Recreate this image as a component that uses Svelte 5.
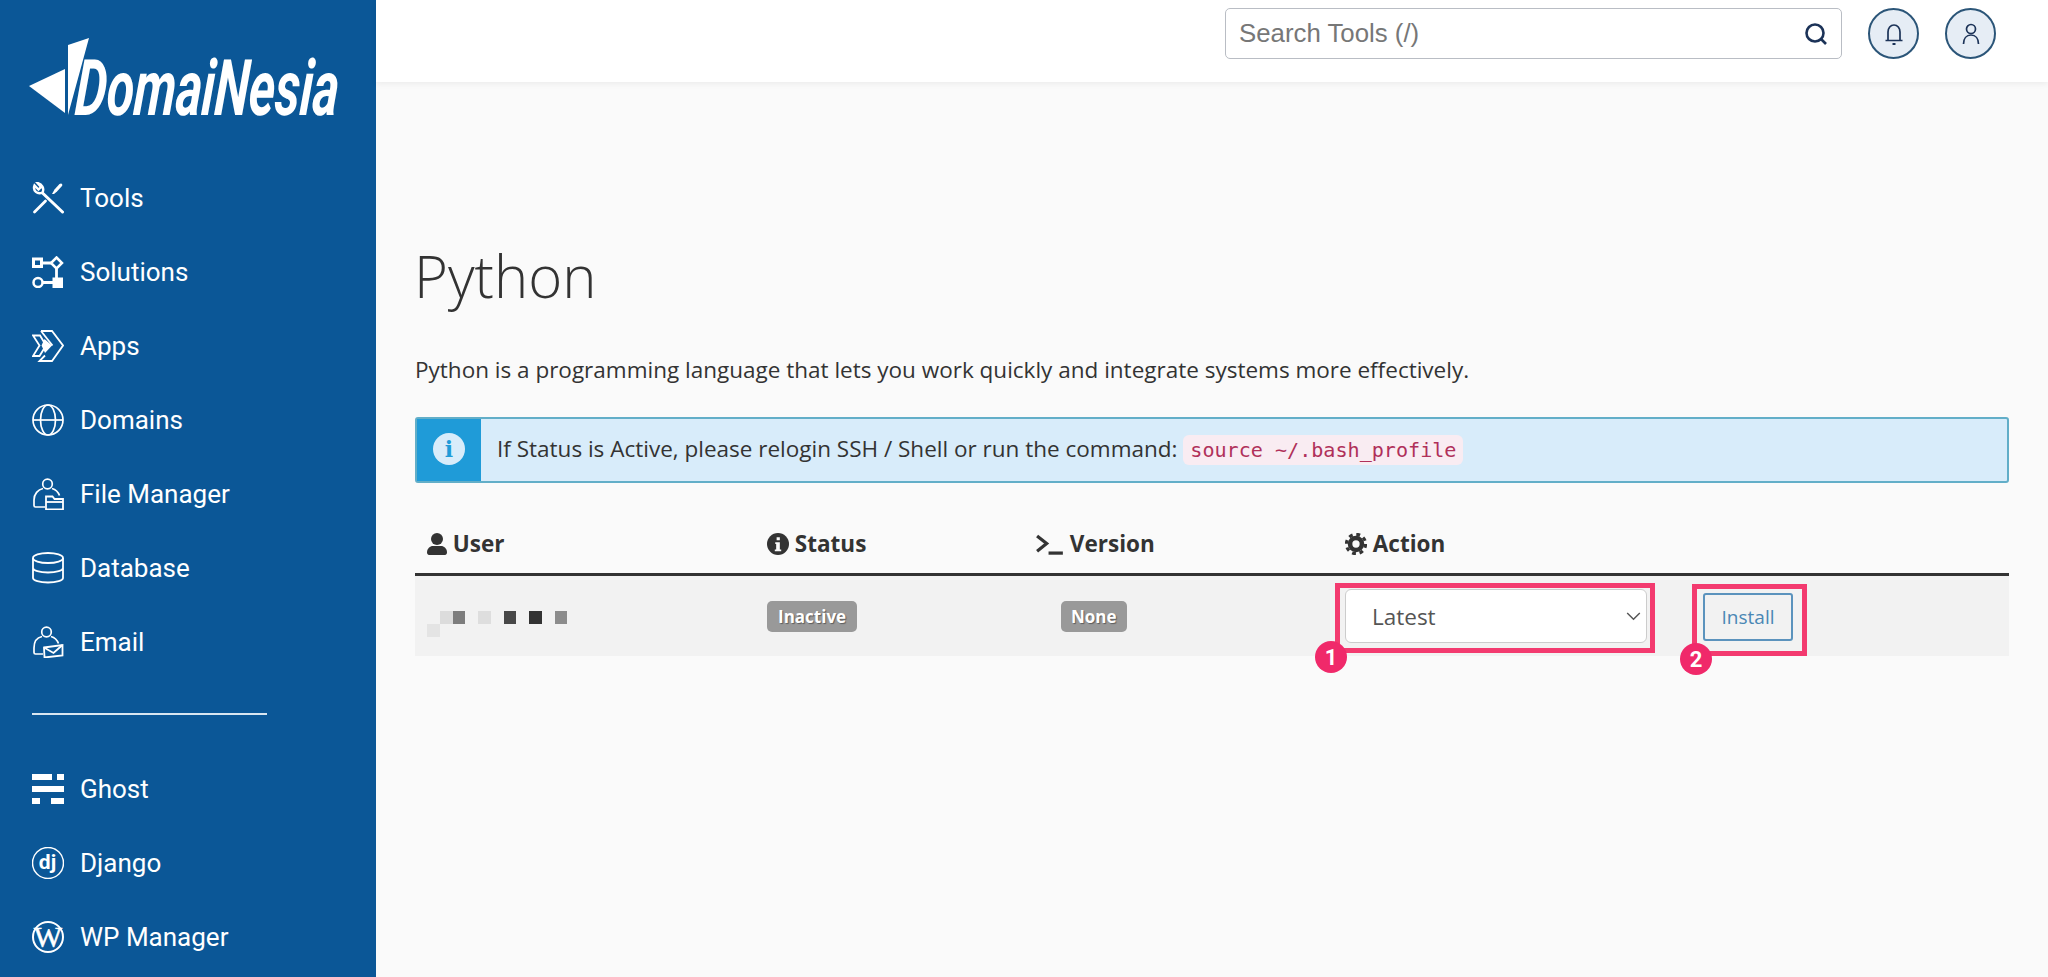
<script>
  const mainNav = [
    { label: 'Tools', icon: 'tools' },
    { label: 'Solutions', icon: 'solutions' },
    { label: 'Apps', icon: 'apps' },
    { label: 'Domains', icon: 'domains' },
    { label: 'File Manager', icon: 'files' },
    { label: 'Database', icon: 'database' },
    { label: 'Email', icon: 'email' }
  ];

  const appNav = [
    { label: 'Ghost', icon: 'ghost' },
    { label: 'Django', icon: 'django' },
    { label: 'WP Manager', icon: 'wp' }
  ];

  // blurred-out username, one block per [column, row, shade]
  const pixels = [
    [0, 1, '#e4e4e4'],
    [1, 0, '#dcdcdc'],
    [2, 0, '#7d7d7d'],
    [4, 0, '#dedede'],
    [6, 0, '#484848'],
    [8, 0, '#333333'],
    [10, 0, '#8c8c8c']
  ];
</script>

{#snippet navIcon(name)}
  <svg class="nav-icon" viewBox="0 0 32 32" fill="none" stroke="#fff" stroke-width="2">
    {#if name === 'tools'}
      <path d="M2.500 3.500C.5 8.500 5.500 13 10.500 10.500 12.500 6.500 10 2 5.500 1L9 5 6.500 7.500z" stroke-width="2.400" fill="none" />
      <path d="M10.500 11l20 19" stroke-width="3" stroke-linecap="round" />
      <path d="M2.500 30l11-11" stroke-width="2.800" stroke-linecap="round" />
      <path d="M20 12l2.500-4.500 5-5.500c2-1.500 3.500.5 2.500 2l-5 5.500-3 2.500z" fill="#fff" stroke="none" />
    {:else if name === 'solutions'}
      <rect x="1.500" y="3" width="8" height="7.500" stroke-width="3" />
      <path d="M24.500 1.500l5.500 5.500-5.500 5.500L19 7z" stroke-width="2.500" />
      <circle cx="6" cy="26.500" r="4.500" stroke-width="2.500" />
      <rect x="21.500" y="22.500" width="8.500" height="8.500" fill="#fff" />
      <path d="M9.500 7H19M24.500 12.500v10M10.500 26.500h11" stroke-width="2.800" />
    {:else if name === 'apps'}
      <path d="M9 1h11l11 14.500L20 31H7.500l5.500-5.500" stroke-width="1.800" />
      <path d="M9 1l11.500 14.500" stroke-width="1.800" />
      <path d="M8 5.500H1l6.500 10L1 26h6.500l6.500-10.500z" stroke-width="1.800" />
      <path d="M12.500 9l7.500 6.500-7 7.500-3.500-7.500z" fill="#fff" stroke="none" />
    {:else if name === 'domains'}
      <circle cx="16" cy="16" r="15" stroke-width="1.700" />
      <ellipse cx="16" cy="16" rx="7.500" ry="15" stroke-width="1.700" />
      <path d="M1 16h30" stroke-width="1.700" />
    {:else if name === 'files'}
      <circle cx="15.500" cy="6" r="4.800" stroke-width="1.700" />
      <path d="M13 29H3.500c-1 0-1.500-.5-1.500-1.500V22C2 16 6 11.500 11 10.500M20 10.500c3.500 1 6 3 7.500 7" stroke-width="1.700" />
      <path d="M14 31.500V18.500h6.500l2 2.500H31v10.500z" stroke-width="1.800" />
      <path d="M14 24h17" stroke-width="1.800" />
    {:else if name === 'database'}
      <ellipse cx="16" cy="6" rx="15" ry="5" stroke-width="1.800" />
      <path d="M1 6v20c0 2.500 6.500 4.500 15 4.500S31 28.500 31 26V6M1 16c0 2.500 6.500 4.500 15 4.500S31 18.500 31 16" stroke-width="1.800" />
    {:else if name === 'email'}
      <circle cx="14.500" cy="6" r="4.800" stroke-width="1.700" />
      <path d="M11 28H3.500c-1 0-1.500-.5-1.500-1.500V22C2 16 5 11.500 10 10.500M19 10.500c3.500 1 6 3 7.500 7" stroke-width="1.700" />
      <path d="M12 21.500l18.500-2.500v10.500L12.500 31.500z" stroke-width="1.800" />
      <path d="M12 21.500l9.500 5.500 9-8" stroke-width="1.800" />
    {:else if name === 'ghost'}
      <g fill="#fff" stroke="none">
        <rect x="0" y="1" width="20" height="6" />
        <rect x="25" y="1" width="7" height="6" />
        <rect x="0" y="13" width="32" height="6" />
        <rect x="0" y="25" width="8" height="6" />
        <rect x="19" y="25" width="13" height="6" />
      </g>
    {:else if name === 'django'}
      <circle cx="16" cy="16" r="15.500" stroke-width="1.500" />
      <text x="15.500" y="22" text-anchor="middle" class="icon-text django">dj</text>
    {:else if name === 'wp'}
      <circle cx="16" cy="16" r="15" stroke-width="2" />
      <text x="16" y="25.500" text-anchor="middle" class="icon-text wp">W</text>
    {/if}
  </svg>
{/snippet}

<div class="app">
  <aside class="sidebar">
    <svg class="logo" viewBox="0 0 340 90" width="340" height="90" role="img" aria-label="DomaiNesia">
      <polygon points="0,49 36,32 36,76" fill="#fff" />
      <polygon points="39,8 60,1 39,78" fill="#fff" />
      <text transform="translate(45 78) skewX(-4) scale(.64 1)" class="wordmark">DomaiNesia</text>
    </svg>

    <nav class="nav">
      {#each mainNav as item}
        <a class="nav-item" href="#top">
          {@render navIcon(item.icon)}
          <span>{item.label}</span>
        </a>
      {/each}
    </nav>

    <div class="divider"></div>

    <nav class="nav">
      {#each appNav as item}
        <a class="nav-item" href="#top">
          {@render navIcon(item.icon)}
          <span>{item.label}</span>
        </a>
      {/each}
    </nav>
  </aside>

  <div class="content">
    <header class="topbar">
      <div class="search">
        <input type="text" placeholder="Search Tools (/)" />
        <svg viewBox="0 0 24 24" width="24" height="24" fill="none" stroke="#1c3358" stroke-width="2.600">
          <circle cx="11" cy="11" r="8.500" />
          <path d="M17 17l5 5" />
        </svg>
      </div>
      <button class="round-btn" aria-label="Notifications">
        <svg viewBox="0 0 24 24" width="24" height="24" fill="none" stroke="#1c3358" stroke-width="1.700">
          <path d="M3.500 18.500h17M6 18.500V10c0-4 2.500-7 6-7s6 3 6 7v8.500" />
          <path d="M10.500 22h3" stroke-width="2" />
        </svg>
      </button>
      <button class="round-btn" aria-label="Account">
        <svg viewBox="0 0 24 24" width="24" height="24" fill="none" stroke="#1c3358" stroke-width="1.700">
          <circle cx="12" cy="7" r="4.500" />
          <path d="M4.500 22c0-5.500 3-9 7.500-9s7.500 3.500 7.500 9" />
        </svg>
      </button>
    </header>

    <main class="page">
      <h1>Python</h1>
      <p class="lead">Python is a programming language that lets you work quickly and integrate systems more effectively.</p>

      <div class="alert">
        <div class="alert-icon">
          <span class="info-dot">i</span>
        </div>
        <p>If Status is Active, please relogin SSH / Shell or run the command: <code>source ~/.bash_profile</code></p>
      </div>

      <table>
        <thead>
          <tr>
            <th class="col-user">
              <svg viewBox="0 0 20 22" width="20" height="22" fill="#333">
                <circle cx="10" cy="6" r="6" />
                <path d="M0 19.500c0-4 3-6.500 6-6.500h8c3 0 6 2.500 6 6.500 0 1.500-1 2.500-2 2.500H2c-1 0-2-1-2-2.500z" />
              </svg>
              User
            </th>
            <th class="col-status">
              <svg viewBox="0 0 24 24" width="22" height="22">
                <circle cx="12" cy="12" r="12" fill="#333" />
                <path d="M9 10h5v8h1.500v2h-7v-2H10v-6H9zM10.500 4.500h3.500v3.500h-3.500z" fill="#fafafa" />
              </svg>
              Status
            </th>
            <th class="col-version">
              <svg viewBox="0 0 30 22" width="29" height="21" fill="none" stroke="#333" stroke-width="3.400">
                <path d="M2 2l10 8-10 8" />
                <path d="M14 20h15" />
              </svg>
              Version
            </th>
            <th>
              <svg viewBox="0 0 24 24" width="22" height="22" fill="none" stroke="#333">
                <circle cx="12" cy="12" r="6.500" stroke-width="5" />
                <circle cx="12" cy="12" r="10.500" stroke-width="3.400" stroke-dasharray="4.200 4.050" />
              </svg>
              Action
            </th>
          </tr>
        </thead>
        <tbody>
          <tr>
            <td>
              <div class="masked" aria-label="hidden username">
                {#each pixels as [col, row, shade]}
                  <i style="grid-column: {col + 1}; grid-row: {row + 1}; background: {shade}"></i>
                {/each}
              </div>
            </td>
            <td><span class="badge">Inactive</span></td>
            <td><span class="badge badge-none">None</span></td>
            <td>
              <div class="actions">
                <div class="marked select-wrap">
                  <select>
                    <option>Latest</option>
                  </select>
                  <svg class="chevron" viewBox="0 0 16 10" width="15" height="9" fill="none" stroke="#555" stroke-width="1.600">
                    <path d="M1 1l7 7 7-7" />
                  </svg>
                  <span class="frame frame-one"></span>
                  <span class="step step-one">1</span>
                </div>
                <div class="marked install-wrap">
                  <button class="install">Install</button>
                  <span class="frame frame-two"></span>
                  <span class="step step-two">2</span>
                </div>
              </div>
            </td>
          </tr>
        </tbody>
      </table>
    </main>
  </div>
</div>

<style>
  :global(body) {
    margin: 0;
    background: #fafafa;
  }

  .app {
    display: flex;
    height: 977px;
    overflow: hidden;
  }

  .sidebar {
    width: 376px;
    flex-shrink: 0;
    background: #0b5797;
    padding: 37px 0 0 29px;
    box-sizing: border-box;
  }

  .logo {
    display: block;
    overflow: visible;
  }

  .wordmark {
    font-family: Roboto, "Liberation Sans", sans-serif;
    font-size: 78px;
    font-style: italic;
    font-weight: 700;
    fill: #fff;
  }

  .nav {
    display: flex;
    flex-direction: column;
    gap: 26px;
    margin-top: 47px;
  }

  .divider + .nav {
    margin-top: 50px;
  }

  .nav-item {
    display: flex;
    align-items: center;
    gap: 16px;
    height: 48px;
    padding-left: 3px;
    color: #fff;
    font-family: Roboto, sans-serif;
    font-size: 26px;
    text-decoration: none;
  }

  .nav-icon {
    width: 32px;
    height: 32px;
    flex-shrink: 0;
  }

  .icon-text {
    fill: #fff;
    stroke: none;
  }

  .django {
    font-family: Roboto, sans-serif;
    font-size: 21px;
    font-weight: 700;
  }

  .wp {
    font-family: "Liberation Serif", serif;
    font-size: 30px;
    font-weight: 400;
    stroke: #fff;
    stroke-width: 0.500px;
  }

  .divider {
    width: 235px;
    height: 2px;
    margin: 47px 0 0 3px;
    background: #d9e6f1;
  }

  .content {
    flex: 1;
    min-width: 0;
  }

  .topbar {
    display: flex;
    justify-content: flex-end;
    align-items: flex-start;
    gap: 26px;
    height: 82px;
    padding: 8px 52px 0 0;
    box-sizing: border-box;
    background: #fff;
    box-shadow: 0 2px 6px rgba(0, 0, 0, 0.06);
  }

  .search {
    display: flex;
    align-items: center;
    width: 617px;
    height: 51px;
    padding: 0 13px 0 13px;
    box-sizing: border-box;
    border: 1.500px solid #b9bdc4;
    border-radius: 5px;
    background: #fff;
  }

  .search input {
    flex: 1;
    min-width: 0;
    border: 0;
    outline: 0;
    padding: 0;
    background: transparent;
    font-family: "Liberation Sans", sans-serif;
    font-size: 25.800px;
  }

  .search input::placeholder {
    color: #777;
  }

  .round-btn {
    display: flex;
    align-items: center;
    justify-content: center;
    width: 51px;
    height: 51px;
    padding: 0;
    border: 2px solid #2b5578;
    border-radius: 50%;
    background: #e6edf5;
  }

  .page {
    padding: 161px 39px 0 39px;
    color: #333;
    font-family: "Open Sans", sans-serif;
  }

  h1 {
    margin: 0 0 0 -1px;
    font-size: 58px;
    font-weight: 300;
    line-height: 66px;
  }

  .lead {
    margin: 45px 0 0;
    font-size: 22.500px;
    line-height: 32px;
  }

  .alert {
    display: flex;
    align-items: center;
    height: 66px;
    margin-top: 31px;
    box-sizing: border-box;
    border: 2px solid #62aec8;
    border-radius: 3px;
    background: #d8ecfa;
  }

  .alert-icon {
    display: flex;
    align-items: center;
    justify-content: center;
    width: 64px;
    height: 100%;
    background: #1f9bd8;
  }

  .info-dot {
    display: flex;
    align-items: center;
    justify-content: center;
    width: 32px;
    height: 32px;
    margin-bottom: 2px;
    border-radius: 50%;
    background: #d8ecfa;
    color: #1f9bd8;
    font-family: "DejaVu Serif", serif;
    font-size: 22px;
    font-weight: 700;
  }

  .alert p {
    margin: 0 0 3px 16px;
    font-size: 22.500px;
  }

  code {
    padding: 3px 7px;
    border-radius: 6px;
    background: #f9ecf2;
    color: #b0305a;
    font-family: "DejaVu Sans Mono", monospace;
    font-size: 20.100px;
  }

  table {
    width: 100%;
    margin-top: 27px;
    border-collapse: collapse;
    table-layout: fixed;
  }

  th {
    height: 59px;
    padding: 4px 0 0 12px;
    border-bottom: 3px solid #333;
    font-size: 22.500px;
    font-weight: 700;
    text-align: left;
  }

  th svg {
    vertical-align: -3px;
  }

  .col-user {
    width: 328px;
  }

  .col-status {
    width: 256px;
  }

  .col-version {
    width: 298px;
  }

  td {
    height: 80px;
    padding: 0 0 0 12px;
    background: #f2f2f2;
  }

  .masked {
    display: grid;
    grid-template-columns: repeat(11, 12.750px);
    grid-template-rows: repeat(2, 13px);
    margin-top: 16px;
  }

  .badge {
    display: inline-block;
    padding: 4px 11px;
    border-radius: 5px;
    background: #999;
    color: #fff;
    font-size: 17px;
    font-weight: 700;
    line-height: 23px;
    text-shadow: 1px 1px 1px rgba(0, 0, 0, 0.4);
  }

  .badge-none {
    margin-left: 26px;
    padding: 4px 10px;
  }

  .actions {
    display: flex;
    align-items: center;
    gap: 56px;
  }

  .marked {
    position: relative;
    flex-shrink: 0;
  }

  .select-wrap {
    width: 302px;
    height: 54px;
  }

  .install-wrap {
    margin-top: 2px;
  }

  select {
    width: 100%;
    height: 100%;
    padding: 0 0 0 26px;
    border: 1.500px solid #ccc;
    border-radius: 6px;
    background: #fff;
    color: #555;
    font-family: "Open Sans", sans-serif;
    font-size: 22.500px;
    appearance: none;
  }

  .chevron {
    position: absolute;
    top: 23px;
    right: 6px;
  }

  .install {
    display: block;
    width: 90px;
    height: 48px;
    padding: 0;
    border: 2px solid #5b93bd;
    border-radius: 3px;
    background: transparent;
    color: #4a87b5;
    font-family: "Open Sans", sans-serif;
    font-size: 19px;
  }

  .frame {
    position: absolute;
    border: 5px solid #f33a6f;
    pointer-events: none;
  }

  .frame-one {
    inset: -6px -8px -10px -10px;
  }

  .frame-two {
    inset: -9px -14px -15px -11px;
  }

  .step {
    position: absolute;
    display: flex;
    align-items: center;
    justify-content: center;
    width: 32px;
    height: 32px;
    border-radius: 50%;
    background: #f0296a;
    color: #fff;
    font-family: Roboto, sans-serif;
    font-size: 22px;
    font-weight: 700;
  }

  .step-one {
    left: -30px;
    top: 52px;
  }

  .step-two {
    left: -23px;
    top: 50px;
  }
</style>
